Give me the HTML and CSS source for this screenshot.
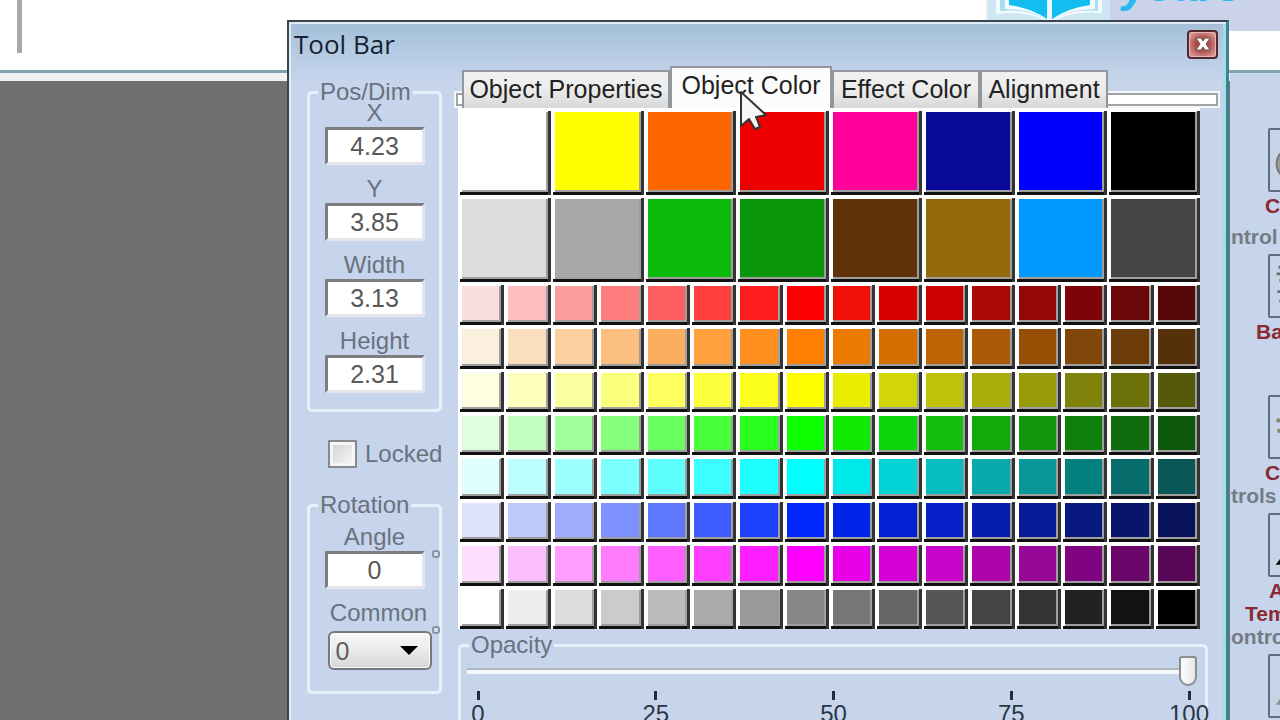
FILE: index.html
```html
<!DOCTYPE html>
<html lang="en">
<head>
<meta charset="utf-8">
<title>Tool Bar</title>
<link rel="stylesheet" href="styles.css">
</head>
<body>
<div class="app">
  <header class="header">
    <div class="divider"></div>
    <div class="brand">
      <svg class="book" viewBox="0 0 122 26" aria-hidden="true">
        <rect width="122" height="26" fill="#cfe6f3"/>
        <path d="M8 0V14Q40 10 58 22H64Q84 10 114 13V0Z" fill="#f4fbfe"/>
        <path d="M12 0V11Q40 8 58 20H64Q84 8 110 11V0Z" fill="#a9def0"/>
        <path d="M17 0V9Q44 9 58 20H64Q82 9 107 9V0Z" fill="#f4fbfe"/>
        <path d="M21 0V5Q44 8 59 19V0ZM64 0V19Q80 8 102 5V0Z" fill="#12bdf0"/>
        <path d="M59 0H64V26H59Z" fill="#e6f7fd"/>
      </svg>
      <span class="brand-name">years</span>
    </div>
  </header>
  <div class="workspace">
    <main class="canvas"></main>
    <aside class="sidebar">
      <button class="tool" aria-label="Circle"><svg viewBox="0 0 64 64"><circle cx="24" cy="36" r="17" fill="#9b9b98" stroke="#777" stroke-width="2"/></svg></button>
      <span class="tool-label c">C</span>
      <h2 class="section spaced">ntrol</h2>
      <button class="tool" aria-label="Background"><svg viewBox="0 0 64 64"><path d="M9 12h8M7 19h8M10 26h7M8 38h6M10 48h8" stroke="#69736c" stroke-width="3"/></svg></button>
      <span class="tool-label ba">Ba</span>
      <button class="tool gap" aria-label="Clip art"><svg viewBox="0 0 64 64"><path d="M7 25h8M8 36h8" stroke="#8d8467" stroke-width="4"/><path d="M11 44h8" stroke="#77796f" stroke-width="4"/></svg></button>
      <span class="tool-label c">C</span>
      <h2 class="section">trols</h2>
      <button class="tool" aria-label="Arrow"><svg viewBox="0 0 64 64"><path d="M6 53L22 32V53Z" fill="#050505"/></svg></button>
      <span class="tool-label a">A</span>
      <span class="tool-label tem">Tem</span>
      <h2 class="section">ontro</h2>
      <button class="tool" aria-label="Template"><svg viewBox="0 0 64 64"><path d="M6 52L22 30V52Z" fill="#8b948d"/></svg></button>
    </aside>
  </div>

  <section class="dialog" role="dialog" aria-labelledby="dialog-title">
    <div class="titlebar">
      <h1 id="dialog-title">Tool Bar</h1>
      <button class="close" aria-label="Close">
        <svg viewBox="0 0 16 14"><path d="M1 1H6L8 4L10 1H15L11 7L15 13H10L8 10L6 13H1L5 7Z" fill="#fff" stroke="#6d5150" stroke-width="1"/></svg>
      </button>
    </div>
    <div class="body">
      <form class="props">
        <fieldset class="group position">
          <legend>Pos/Dim</legend>
          <div class="field"><label for="x">X</label><input id="x" type="text" value="4.23"></div>
          <div class="field"><label for="y">Y</label><input id="y" type="text" value="3.85"></div>
          <div class="field"><label for="w">Width</label><input id="w" type="text" value="3.13"></div>
          <div class="field"><label for="h">Height</label><input id="h" type="text" value="2.31"></div>
        </fieldset>
        <div class="locked"><input id="locked" type="checkbox"><label for="locked">Locked</label></div>
        <fieldset class="group rotation">
          <legend>Rotation</legend>
          <div class="field"><label for="angle">Angle</label><input id="angle" type="text" value="0"><i class="degree"></i></div>
          <div class="field"><label class="wide" for="common">Common</label><select id="common"><option>0</option></select><i class="degree"></i></div>
        </fieldset>
      </form>
      <div class="colors">
        <div class="tabs" role="tablist">
          <button class="tab t1" role="tab">Object Properties</button>
          <button class="tab t2 active" role="tab" aria-selected="true">Object Color</button>
          <button class="tab t3" role="tab">Effect Color</button>
          <button class="tab t4" role="tab">Alignment</button>
          <svg class="cursor" viewBox="0 0 28 40" aria-hidden="true"><path d="M1 1V35L9 28L15 38L20 36L16 26L26 24Z" fill="#f6f6f8" stroke="#333" stroke-width="2" stroke-linejoin="round"/></svg>
        </div>
        <div class="palette" id="palette"></div>
        <fieldset class="group opacity">
          <legend>Opacity</legend>
          <input type="range" min="0" max="100" value="100" aria-label="Opacity">
          <div class="scale"><span>0</span><span>25</span><span>50</span><span>75</span><span>100</span></div>
        </fieldset>
      </div>
    </div>
  </section>
</div>
<script src="palette.js"></script>
</body>
</html>
```
FILE: styles.css
```css
* { box-sizing: border-box; }
body { margin: 0; font-family: "Liberation Sans", Arial, sans-serif; }
button, input, select { font: inherit; margin: 0; padding: 0; }
h1, h2 { margin: 0; font-weight: normal; }

.app { position: relative; height: 100vh; overflow: hidden; display: flex; flex-direction: column; background: #fff; }
.header { display: flex; justify-content: space-between; align-items: flex-start; height: 73px; padding-left: 17px; border-bottom: 3px solid #7fa4b0; }
.divider { width: 5px; height: 53px; background: #a9a9a9; }
.brand { display: flex; width: 294px; height: 31px; overflow: hidden; background: #cbd3ea; align-items: flex-end; gap: 12px; border-left: 2px solid #e8eef3; }
.book { width: 122px; height: 26px; align-self: flex-start; }
.brand-name { font-size: 46px; line-height: 46px; font-weight: bold; font-style: italic; color: #1fbcec; margin-bottom: 23px; }

.workspace { flex: 1; min-height: 0; display: flex; }
.canvas { flex: 1; background: #707070; border-top: 8px solid #f2f2f2; }
.sidebar { width: 50px; overflow: hidden; padding-top: 55px; background: #c6d5ec; display: flex; flex-direction: column; align-items: flex-start; }
.tool { flex: none; width: 64px; height: 64px; margin: 0 0 2px 38px; border: 2px solid #5e6c7c; border-radius: 2px; background: #c6d3e8; }
.tool.gap { margin-top: 52px; }
.tool svg { display: block; width: 60px; height: 60px; }
.tool-label { font-size: 21px; line-height: 23px; font-weight: bold; color: #8a2a34; }
.tool-label.c { padding-left: 35px; }
.tool-label.ba { padding-left: 26px; }
.tool-label.a { padding-left: 39px; }
.tool-label.tem { padding-left: 15px; }
.section { font-size: 21px; line-height: 23px; font-weight: bold; color: #747c86; margin-bottom: 6px; padding-left: 1px; }
.section.spaced { margin-top: 8px; }

.dialog { position: absolute; top: 20px; left: 287px; right: 51px; min-height: 740px; border: 2px solid #3b4650; border-right: 3px solid #3f8391; background: linear-gradient(#a3bed7, #b4cae3 28px, #c6d5ec 60px); box-shadow: inset 2px 2px 0 #dfecf7, inset -3px 0 0 #a5dcea; }
.titlebar { display: flex; justify-content: space-between; align-items: center; height: 44px; padding: 0 8px 0 5px; }
.titlebar h1 { font-family: "Open Sans", "Noto Sans", sans-serif; font-size: 26px; line-height: 32px; color: #152433; }
.close { display: flex; align-items: center; justify-content: center; width: 31px; height: 29px; border: 2px solid #53282d; border-radius: 4px; background: radial-gradient(#ad4b47 35%, #d99a98 85%); box-shadow: inset 0 0 0 1px #e2b6b4; }
.close svg { width: 16px; height: 14px; }
.body { display: flex; gap: 14px; padding: 0 8px 0 18px; }

.props { width: 135px; flex: none; padding-top: 19px; font-size: 24px; color: #69727e; }
.group { margin: 0; min-width: 0; padding: 0; border: 3px solid #e6f2fa; border-radius: 5px; color: #69727e; font-size: 24px; }
.group legend { margin-left: 8px; padding: 0 2px; line-height: 14px; }
.position { padding-bottom: 16px; }
.field { position: relative; display: flex; flex-direction: column; align-items: center; margin-bottom: 10px; }
.field:last-child { margin-bottom: 0; }
.field label { line-height: 28px; }
.field input { width: 100px; height: 38px; text-align: center; font-size: 25px; color: #595959; background: #fff; border: 3px solid; border-color: #7d7d80 #e3e5ea #e3e5ea #7d7d80; }
.locked { display: flex; align-items: center; gap: 8px; margin: 28px 0 30px 21px; height: 28px; }
.locked label { white-space: nowrap; }
.locked input { appearance: none; flex: none; width: 29px; height: 28px; border: 2px solid #868a90; background: linear-gradient(135deg, #cfcfcf, #fafafa); box-shadow: inset 0 0 0 3px #f5f5f5; }
.rotation { padding: 11px 0 21px; }
.field select { appearance: none; width: 104px; height: 39px; margin: 4px 0 0 10px; padding-left: 6px; font-size: 25px; color: #606060; border: 2px solid #75787c; border-radius: 6px; background: linear-gradient(#f6f6f6, #ebebeb 50%, #d6d6d6); box-shadow: inset 0 0 0 1px #fafafa; }
.field .wide { padding-left: 8px; }
.field:has(select)::after { content: ""; position: absolute; right: 21px; bottom: 15px; border: 9px solid transparent; border-top-color: #000; border-bottom: 0; pointer-events: none; }
.degree { position: absolute; right: -1px; top: 27px; width: 8px; height: 8px; border: 2px solid #8894a4; border-radius: 3px; background: #d5e1f0; }

.colors { flex: 1; min-width: 0; }
.tabs { position: relative; display: flex; align-items: flex-end; height: 42px; padding-left: 6px; }
.tabs::before { content: ""; position: absolute; left: 0; right: 0; bottom: 2px; height: 9px; background: #fff; border: 2px solid #a0a4a8; box-shadow: 0 0 0 2px #f4f6fa; }
.tab { position: relative; height: 38px; padding-bottom: 2px; border: 2px solid #92979d; border-bottom: 0; background: linear-gradient(#f1f1f1, #ececec 50%, #d8d8d8); color: #222; font-size: 25px; line-height: 32px; white-space: nowrap; }
.tab.active { height: 42px; padding-bottom: 7px; background: #fcfcfc; }
.t1 { width: 208px; }
.t2 { width: 162px; }
.t3 { width: 148px; }
.t4 { width: 128px; }
.cursor { position: absolute; z-index: 2; left: 284px; top: 25px; width: 28px; height: 40px; }

.palette { display: grid; grid-template-columns: repeat(16, 1fr); grid-template-rows: 2fr 2fr repeat(8, 1fr); height: 521px; margin: 0 18px 0 2px; background: #fff; }
.swatch { border: 0; box-shadow: inset 2px 0 0 #fff, inset 0 3px 0 #fff, inset -3px 0 0 #333, inset 0 -3px 0 #111, inset 4px 4px 0 #fff, inset -5px -5px 0 #a09f9f; min-width: 0; }
.swatch.large { grid-column: span 2; }

.opacity { margin: 9px 10px 0 2px; padding-bottom: 12px; }
.opacity legend { margin-left: 8px; }
.opacity input { appearance: none; display: block; width: calc(100% - 14px); height: 30px; margin: 4px 0 0 6px; background: linear-gradient(#b1b7bd 0 2px, #f2f8fc 2px) 0 12px / 100% 6px no-repeat; }
.opacity input::-webkit-slider-thumb { appearance: none; width: 18px; height: 30px; border: 2px solid #8b8e91; border-radius: 3px 3px 9px 9px; background: linear-gradient(90deg, #fff, #e6e6e6); }
.scale { display: flex; justify-content: space-between; margin: 5px 15px 0 16px; color: #2b3644; font-size: 24px; line-height: 28px; }
.scale span { display: flex; flex-direction: column; align-items: center; width: 2px; }
.scale span::before { content: ""; width: 3px; height: 9px; background: #1f2d44; flex: none; }
```
FILE: palette.js
```js
const large = [
  "#ffffff", "#ffff00", "#ff6600", "#ee0000", "#ff0099", "#080899", "#0000ff", "#000000",
  "#dcdcdc", "#a8a8a8", "#0abb0a", "#0a960a", "#5f330a", "#936a0b", "#0099ff", "#444444"
];

const small = `
fbdfde fcbdbf fb9e9e ff7c7c ff5e5e ff3e3e ff1e1e ff0000 ef1105 d90000 cc0000 ab0707 940709 7d0508 6a0709 560607
fbefde fbdfbd fbcf9e fbbf80 fbaf5e ff9f3e ff901f ff8000 ea7a00 d56f00 bf6405 ab5a08 965006 80460a 6c3c08 563008
feffde feffbd fcff9e faff7c fcff5e fcff3c fcff1e ffff00 e9ec00 d2d507 bfc208 aaae08 979b08 80830b 6b7008 55590a
dffede c0ffbd a2ff9e 86ff7d 68ff5e 49ff3c 28ff1e 0cff00 0fea00 0ed508 12c00b 10aa0a 12960c 10800c 0f6c0c 0b580b
dfffff bdffff 9effff 7cffff 5effff 3effff 1effff 00ffff 00e9ea 00d4d4 04bebf 08aaab 0a9797 058080 066c6c 095857
dde2fd bdc8fb 9eacfd 7d92ff 5e77ff 3e5cff 1e41ff 0028ff 0024ea 0422d3 061fc8 061dad 071b96 081980 07166a 08125a
fddefc fbbdfb ff9eff ff7cff ff5eff ff3eff ff1eff ff00ff e900e9 d400d4 c805c8 ab05ab 980898 800480 6b066b 590759
ffffff eeeeee dddddd cbcbcb bcbcbc aaaaaa 999999 888888 777777 666666 555555 444444 333333 222222 121212 000000
`.trim().split(/\s+/).map((hex) => "#" + hex);

const palette = document.getElementById("palette");

function addSwatch(color, className) {
  const swatch = document.createElement("button");
  swatch.className = className;
  swatch.style.backgroundColor = color;
  swatch.setAttribute("aria-label", "Color " + color);
  palette.append(swatch);
}

large.forEach((color) => addSwatch(color, "swatch large"));
small.forEach((color) => addSwatch(color, "swatch"));
```
